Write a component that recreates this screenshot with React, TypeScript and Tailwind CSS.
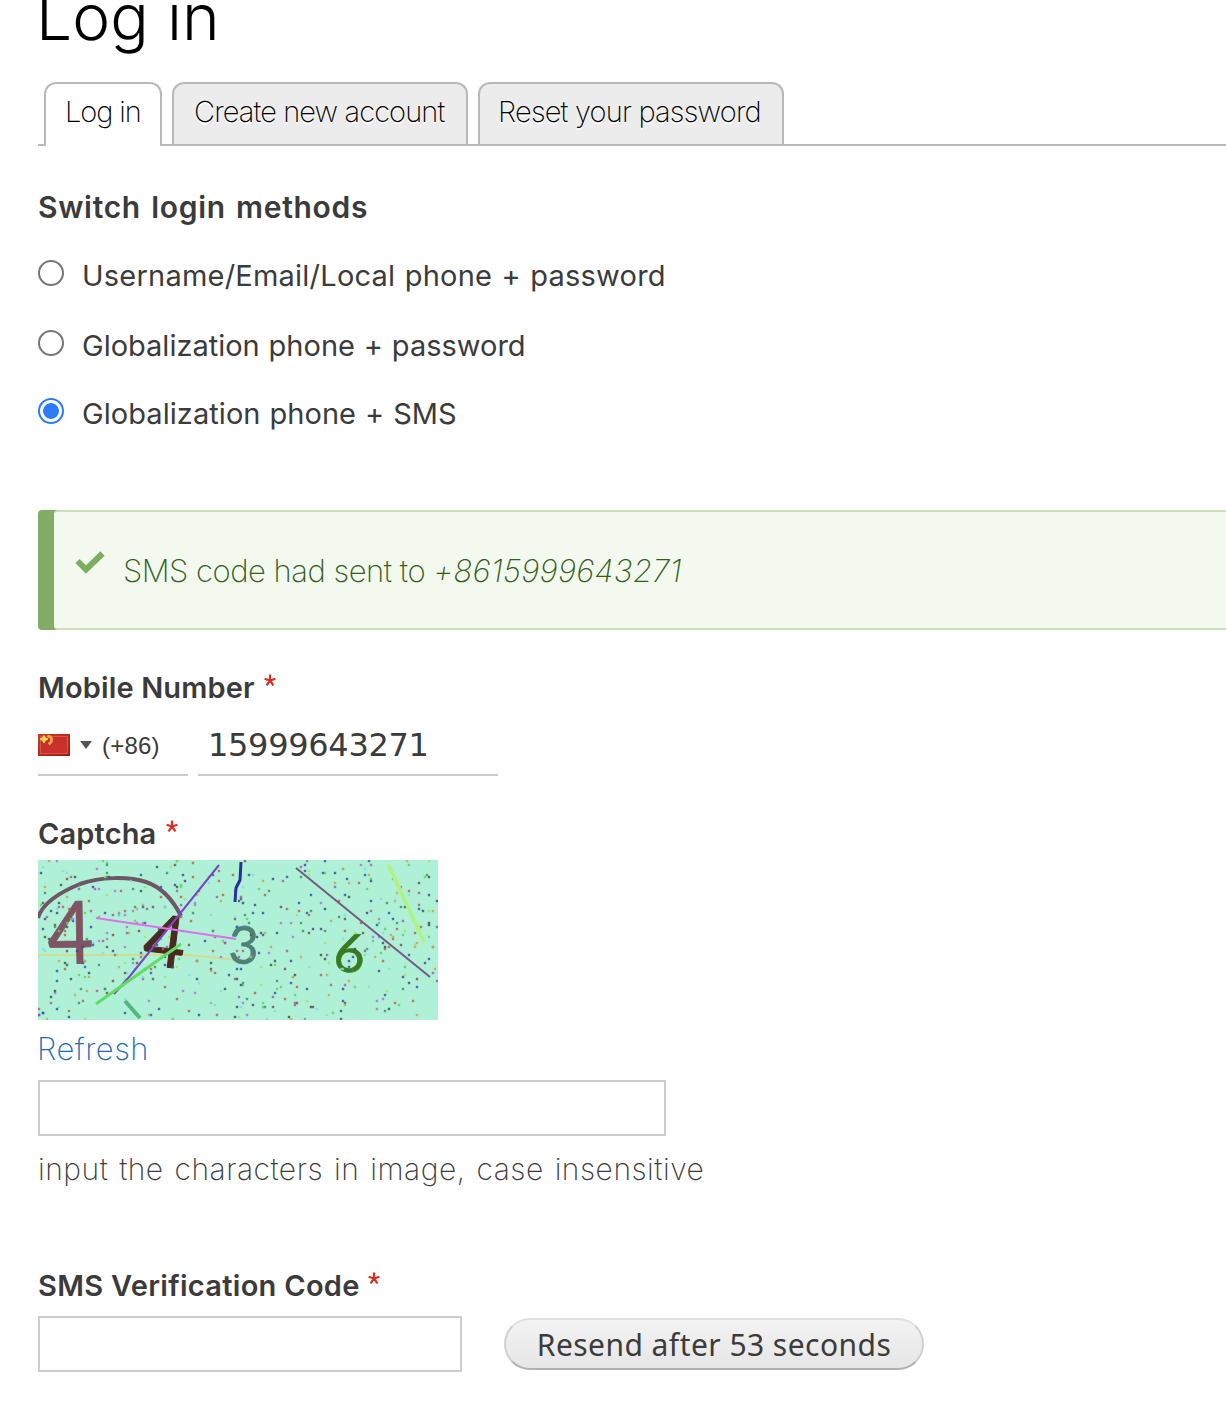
import { useMemo, useState } from "react";

type Method = {
  id: string;
  label: string;
  spacing: string;
};

const METHODS: Method[] = [
  {
    id: "local",
    label: "Username/Email/Local phone + password",
    spacing: "tracking-[0.22px] [word-spacing:1px]",
  },
  {
    id: "global",
    label: "Globalization phone + password",
    spacing: "tracking-[0px] [word-spacing:0.7px]",
  },
  {
    id: "sms",
    label: "Globalization phone + SMS",
    spacing: "tracking-[0.06px] [word-spacing:0.7px]",
  },
];

const DOT_COLORS = [
  "#4b3a8f",
  "#a8569b",
  "#3c8f5a",
  "#c9a24e",
  "#7a4a3a",
  "#5fd05a",
  "#2f4fb5",
  "#c2574f",
  "#7fd8e8",
  "#35504a",
  "#b06fd8",
  "#a7e04c",
];

function makeDots(count: number) {
  let seed = 53;
  const next = () => {
    seed = (seed * 16807) % 2147483647;
    return seed / 2147483647;
  };
  return Array.from({ length: count }, () => ({
    x: Math.floor(next() * 200) * 2,
    y: Math.floor(next() * 80) * 2,
    color: DOT_COLORS[Math.floor(next() * DOT_COLORS.length)],
  }));
}

function CaptchaImage() {
  const dots = useMemo(() => makeDots(540), []);

  return (
    <svg
      viewBox="0 0 400 160"
      className="block h-[160px] w-[400px] bg-[#aef1d7]"
      fontFamily="Lato, sans-serif"
      fill="none"
    >
      <path
        d="M0 58C4 44 20 33 42 24C62 17 90 16 108 22C126 28 136 42 143 56"
        stroke="#6f5566"
        strokeWidth="4"
      />
      <path d="M0 95H150L200 100" stroke="#d4dd8c" strokeWidth="2" />
      <text
        transform="translate(10 104) rotate(-1)"
        fontSize="87"
        textLength="46"
        lengthAdjust="spacingAndGlyphs"
        fill="#7f5563"
        stroke="#7f5563"
        strokeWidth="0.8"
      >
        4
      </text>
      <text
        transform="translate(103 104) rotate(7)"
        fontSize="72"
        textLength="42"
        lengthAdjust="spacingAndGlyphs"
        fill="#4a2a20"
        stroke="#4a2a20"
        strokeWidth="1"
      >
        4
      </text>
      <text
        transform="translate(190 103) rotate(2)"
        fontSize="52"
        fill="#4f8078"
        stroke="#4f8078"
        strokeWidth="0.6"
      >
        3
      </text>
      <text
        transform="translate(294 110) rotate(7)"
        fontSize="54"
        fill="#3a7a20"
        stroke="#3a7a20"
        strokeWidth="0.6"
      >
        6
      </text>
      {dots.map((d, i) => (
        <rect
          key={i}
          x={d.x - 0.2}
          y={d.y - 0.2}
          width="2.4"
          height="2.4"
          fill={d.color}
          opacity="0.8"
        />
      ))}
      <path d="M181 5L92 116L76 134" stroke="#7b47c4" strokeWidth="2" />
      <path d="M58 58L198 79" stroke="#e070e8" strokeWidth="2" />
      <path d="M58 144L143 84" stroke="#62dc62" strokeWidth="3" />
      <path d="M203 2L202 20L198 28L197 42" stroke="#2b2f96" strokeWidth="3" />
      <path d="M258 8L392 117" stroke="#765a85" strokeWidth="2" />
      <path d="M350 4L386 82" stroke="#b2f27f" strokeWidth="3.5" />
      <path d="M87 141L102 158" stroke="#52b87c" strokeWidth="4" />
    </svg>
  );
}

function FlagIcon() {
  return (
    <svg viewBox="0 0 32 22" className="h-[22px] w-8">
      <defs>
        <linearGradient id="flag" x1="0" y1="0" x2="1" y2="1">
          <stop offset="0" stopColor="#cf3a2c" />
          <stop offset="1" stopColor="#a01c14" />
        </linearGradient>
      </defs>
      <rect width="32" height="22" fill="url(#flag)" />
      <rect
        x="2.5"
        y="2.5"
        width="27"
        height="17"
        fill="#c8312a"
        stroke="#d2564c"
        strokeWidth="1"
      />
      <path
        d="M6 1.5L7.200 4L10 5L7.200 6.500L6 9L4.500 6.500L2 5L4.500 4Z"
        fill="#fde047"
        stroke="#fde047"
      />
      <path
        d="M9.500 2.500C14.500 2 15 8 10.500 10"
        stroke="#e8a445"
        strokeWidth="2.800"
        fill="none"
      />
    </svg>
  );
}

function Required() {
  return (
    <svg viewBox="0 0 12 13" className="mt-[7px] h-[13px] w-3">
      <path
        d="M6 6.500V0.500M6 6.500L0.600 4.700M6 6.500L11.400 4.700M6 6.500L2.600 11.300M6 6.500L9.400 11.300"
        stroke="#e02b20"
        strokeWidth="2.200"
      />
    </svg>
  );
}

export default function App() {
  const [method, setMethod] = useState("sms");
  const [phone, setPhone] = useState("15999643271");
  const [captcha, setCaptcha] = useState("");
  const [code, setCode] = useState("");

  return (
    <div className="h-[1414px] w-full overflow-hidden bg-white pl-[38px] font-['Inter',sans-serif] text-[#3b3b3b]">
      <h1 className="-mt-[7px] -ml-0.5 h-[89px] text-[64px] leading-[48px] font-light tracking-[0.1px] text-black">
        Log in
      </h1>

      <nav className="flex h-16 border-b-2 border-[#b9b9b9] pl-1.5 text-[29px] leading-[55px] font-extralight whitespace-nowrap text-black">
        <a className="z-10 h-16 w-[118px] rounded-t-xl border-2 border-b-0 border-[#b9b9b9] bg-white pl-[19px] tracking-[-1.1px]">
          Log in
        </a>
        <a className="ml-2.5 h-[62px] w-[296px] rounded-t-xl border-2 border-b-0 border-[#b9b9b9] bg-[#ececec] pl-[20px] tracking-[-0.9px] [text-shadow:0_2px_0_#fff]">
          Create new account
        </a>
        <a className="ml-2.5 h-[62px] w-[306px] rounded-t-xl border-2 border-b-0 border-[#b9b9b9] bg-[#ececec] pl-[18px] tracking-[-0.8px] [text-shadow:0_2px_0_#fff]">
          Reset your password
        </a>
      </nav>

      <h2 className="mt-[41px] h-10 text-[30px] leading-10 font-semibold tracking-[0.7px] whitespace-nowrap [word-spacing:2px]">
        Switch login methods
      </h2>

      <div className="mt-[26px] h-[257px]">
        {METHODS.map((m) => (
          <label key={m.id} className="flex h-[70px] items-start last:-mt-0.5">
            <input
              type="radio"
              name="method"
              checked={method === m.id}
              onChange={() => setMethod(m.id)}
              className="mt-[7px] size-[26px] appearance-none rounded-full border-2 border-[#767676] bg-white checked:border-[#2d7bf9] checked:bg-[radial-gradient(circle,#2d7bf9_7.500px,#fff_8.200px)]"
            />
            <span
              className={`ml-[18px] text-[29px] leading-[45px] whitespace-nowrap ${m.spacing}`}
            >
              {m.label}
            </span>
          </label>
        ))}
      </div>

      <div className="flex h-[120px] rounded-l bg-[#83ad65] pl-4">
        <div className="flex flex-1 rounded-l border-y-2 border-[#cbdfb9] bg-[#f3f9ef] pl-[21px] text-[31px] font-extralight text-[#325e1c]">
          <svg viewBox="0 0 30 23" className="mt-[39px] h-[23px] w-[30px]">
            <path
              d="M2.500 10L11 18.500L27.500 2.500"
              fill="none"
              stroke="#7dae5f"
              strokeWidth="6"
            />
          </svg>
          <p className="ml-[18px] leading-[118px] tracking-[-0.5px] whitespace-nowrap">
            SMS code had sent to{" "}
            <em className="tracking-[0.3px]">+8615999643271</em>
          </p>
        </div>
      </div>

      <div className="mt-[37px] flex h-[41px] text-[29px] leading-[42px] font-semibold">
        <span className="mr-[9px] tracking-[0.15px] whitespace-nowrap">
          Mobile Number
        </span>
        <Required />
      </div>
      <div className="flex h-[68px]">
        <div className="flex w-[150px] items-center border-b-2 border-[#cccccc] pt-2">
          <FlagIcon />
          <svg viewBox="0 0 12 8" className="ml-2.5 h-2 w-3">
            <path d="M0 0H12L6 8Z" fill="#555555" />
          </svg>
          <span className="ml-2.5 pt-0.5 font-['Liberation_Sans',sans-serif] text-[24px] tracking-[0.2px]">
            (+86)
          </span>
        </div>
        <input
          value={phone}
          onChange={(e) => setPhone(e.target.value)}
          className="ml-2.5 w-[300px] border-b-2 border-[#cccccc] pt-2 pl-2.5 font-['DejaVu_Sans',sans-serif] text-[32px] tracking-[-0.3px] outline-none"
        />
      </div>

      <div className="mt-[37px] flex h-[47px] text-[29px] leading-[42px] font-semibold">
        <span className="mr-2.5 tracking-[0.15px] whitespace-nowrap">
          Captcha
        </span>
        <Required />
      </div>
      <CaptchaImage />
      <a className="-ml-px block h-[60px] text-[31px] leading-[58px] font-extralight tracking-[0.5px] text-[#1f6cb0]">
        Refresh
      </a>
      <input
        value={captcha}
        onChange={(e) => setCaptcha(e.target.value)}
        className="block h-14 w-[628px] border-2 border-[#cccccc] px-2 outline-none"
      />
      <p className="h-[129px] text-[30px] leading-[66px] font-extralight tracking-[0.5px] whitespace-nowrap [word-spacing:2px]">
        input the characters in image, case insensitive
      </p>

      <div className="flex h-[51px] text-[29px] leading-[42px] font-semibold">
        <span className="mr-2 tracking-[0.3px] whitespace-nowrap">
          SMS Verification Code
        </span>
        <Required />
      </div>
      <div className="flex h-14 items-center">
        <input
          value={code}
          onChange={(e) => setCode(e.target.value)}
          className="h-14 w-[424px] border-2 border-[#cccccc] px-2 outline-none"
        />
        <button className="ml-[42px] h-[52px] w-[420px] rounded-full border-2 border-[#d0d0d0] border-t-[#e0e0e0] border-b-[#b2b2b2] bg-linear-to-b from-[#f3f3f3] to-[#e6e6e6] pt-px font-['Noto_Sans',sans-serif] text-[30px] leading-[48px] font-[450] tracking-[0.45px] whitespace-nowrap">
          Resend after 53 seconds
        </button>
      </div>
    </div>
  );
}
